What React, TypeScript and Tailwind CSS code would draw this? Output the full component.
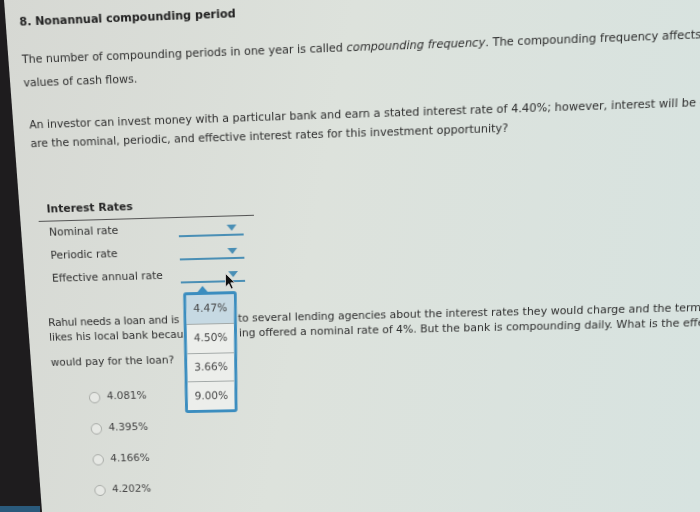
const rates = ['Nominal rate', 'Periodic rate', 'Effective annual rate'];
const choices = ['4.47%', '4.50%', '3.66%', '9.00%'];
const answers = ['4.081%', '4.395%', '4.166%', '4.202%'];

type Pt = [number, number];

// the screenshot is a photo of a monitor: the flat page is mapped onto it with a homography
function solveH(src: Pt[], dst: Pt[]): number[] {
  const A: number[][] = [];
  src.forEach(([x, y], i) => {
    const [u, v] = dst[i];
    A.push([x, y, 1, 0, 0, 0, -u * x, -u * y, u]);
    A.push([0, 0, 0, x, y, 1, -v * x, -v * y, v]);
  });
  for (let c = 0; c < 8; c++) {
    let p = c;
    for (let r = c + 1; r < 8; r++) if (Math.abs(A[r][c]) > Math.abs(A[p][c])) p = r;
    [A[c], A[p]] = [A[p], A[c]];
    for (let r = 0; r < 8; r++) {
      if (r === c) continue;
      const f = A[r][c] / A[c][c];
      for (let k = c; k < 9; k++) A[r][k] -= f * A[c][k];
    }
  }
  return A.map((row, i) => row[8] / row[i]);
}

// screen point -> flat page point
function toFlat(h: number[], u: number, v: number): Pt {
  const a = h[0] - u * h[6];
  const b = h[1] - u * h[7];
  const c = h[3] - v * h[6];
  const d = h[4] - v * h[7];
  const e = u - h[2];
  const f = v - h[5];
  const det = a * d - b * c;
  return [(e * d - b * f) / det, (a * f - e * c) / det];
}

// flat layout anchors (see the class names below)
const TERM = 467.2; // flat width of "to several … and the term"
const RAHUL_Y = 318; // centre of the first line of the loan question
const LAST_RADIO_Y = 494.5;

let s1 = 215;
let H: number[] = [];
for (let i = 0; i < 30; i++) {
  H = solveH(
    [
      [17, 60],
      [678.4, 60],
      [s1 + TERM, RAHUL_Y],
      [70, LAST_RADIO_Y],
    ],
    [
      [22, 60],
      [702, 35],
      [702, 308],
      [100, 490],
    ]
  );
  s1 = toFlat(H, 238, 316)[0];
}
const s2 = toFlat(H, 239, 334)[0];
const pageTransform = `matrix3d(${H[0]},${H[3]},0,${H[6]},${H[1]},${H[4]},0,${H[7]},0,0,1,0,${H[2]},${H[5]},0,1)`;

const TABLE_LEFT = 23;
const dropL = (toFlat(H, 178, 235)[0] + toFlat(H, 181, 281)[0]) / 2;
const dropR = (toFlat(H, 243, 235)[0] + toFlat(H, 245, 281)[0]) / 2;
const labelW = dropL - TABLE_LEFT;
const dropW = dropR - dropL;

const EFF_ROW_TOP = 262;
const popTL = toFlat(H, 183, 292);
const popTR = toFlat(H, 237, 292);
const popBL = toFlat(H, 185, 413);
const popH = popBL[1] - popTL[1];
const popStyle = {
  left: popTL[0] - dropL,
  top: popTL[1] - EFF_ROW_TOP,
  width: popTR[0] - popTL[0],
  transform: `skewX(${(Math.atan((popBL[0] - popTL[0]) / popH) * 180) / Math.PI}deg)`,
};
const itemH = (popH - 9) / 4;

function Dropdown({ open }: { open?: boolean }) {
  return (
    <div className="relative flex h-full flex-col justify-end pb-[4px]" style={{ width: dropW }}>
      <div className="mb-[3px] flex justify-end pr-[7px]">
        <svg width="10" height="6" viewBox="0 0 10 6">
          <path d="M0 0 L10 0 L5 6 Z" fill="#4a8fb5" />
        </svg>
      </div>
      <div className="h-[2px] bg-[#4a8fb5]" />

      {open && (
        <div className="absolute z-10 origin-top-left" style={popStyle}>
          <svg className="absolute -top-[6px] left-[14px]" width="12" height="7" viewBox="0 0 12 7">
            <path d="M0 7 L6 0 L12 7 Z" fill="#3b8dbf" />
          </svg>
          <div className="overflow-hidden rounded-[3px] border-[3px] border-[#3b8dbf] bg-[#eceeeb] text-center text-[#444]">
            {choices.map((c, i) => (
              <div
                key={c}
                className={`flex items-center justify-center ${i > 0 ? 'border-t border-[#a3a9a8]' : ''} ${
                  i === 0 ? 'bg-[#c6d9e3]' : ''
                }`}
                style={{ height: itemH + (i > 0 ? 1 : 0) }}
              >
                {c}
              </div>
            ))}
          </div>
        </div>
      )}
    </div>
  );
}

export default function App() {
  return (
    <div className="relative h-[512px] w-[700px] overflow-hidden bg-[linear-gradient(100deg,#d6d8d3_0%,#dde2dc_45%,#d7e3e0_100%)] font-['DejaVu_Sans',Verdana,sans-serif] text-[11px] text-[#2e2e2e]">
      <div className="w-[900px] origin-top-left whitespace-nowrap pt-[17px]" style={{ transform: pageTransform }}>
        <h1 className="pl-[17px] text-[11px] font-bold leading-[16px] text-[#222]">
          8. Nonannual compounding period
        </h1>

        <div className="mt-[17px] pl-[17px] leading-[20px]">
          <p>
            The number of compounding periods in one year is called <em>compounding frequency</em>. The
            compounding frequency affects the present and future
          </p>
          <p className="mt-[2px]">values of cash flows.</p>
        </div>

        <div className="mt-[20px] pl-[20px] leading-[20px]">
          <p>
            An investor can invest money with a particular bank and earn a stated interest rate of 4.40%;
            however, interest will be compounded quarterly. What
          </p>
          <p className="-mt-[2px]">are the nominal, periodic, and effective interest rates for this investment opportunity?</p>
        </div>

        {/* rates table */}
        <div className="ml-[23px] mt-[44px] w-[220px]">
          <div className="h-[22px] border-b border-[#555] pl-[9px] font-bold leading-[20px] text-[#262626]">
            Interest Rates
          </div>
          {rates.map((r, i) => (
            <div key={r} className="flex h-[23px] items-center">
              <div className="shrink-0 pl-[10px]" style={{ width: labelW }}>
                {r}
              </div>
              <Dropdown open={i === 2} />
            </div>
          ))}
        </div>

        <div className="mt-[24px] pl-[26px] leading-[18px]">
          <p className="flex">
            <span className="shrink-0 tracking-[-0.2px]" style={{ width: s1 - 26 }}>
              Rahul needs a loan and is
            </span>
            <span>to several lending agencies about the interest rates they would charge and the terms</span>
          </p>
          <p className="-mt-[3px] flex">
            <span className="shrink-0" style={{ width: s2 - 26 }}>
              likes his local bank becaus
            </span>
            <span>ing offered a nominal rate of 4%. But the bank is compounding daily. What is the effective</span>
          </p>
          <p className="mt-[8px]">would pay for the loan?</p>
        </div>

        <div className="mt-[11px] pl-[64px] text-[#444]">
          {answers.map((a) => (
            <label key={a} className="flex h-[33px] items-center gap-[7px]">
              <span className="h-[12px] w-[12px] rounded-full border border-[#a5a8a4] bg-[#e6e8e4]" />
              {a}
            </label>
          ))}
        </div>
      </div>

      {/* mouse pointer */}
      <svg className="absolute left-[225px] top-[273px]" width="11" height="17" viewBox="0 0 11 17">
        <path
          d="M0.5 0.5 L0.5 14 L3.8 10.8 L6.2 16 L8.2 15 L5.8 9.8 L10 9.8 Z"
          fill="#111"
          stroke="#ddd"
          strokeWidth="0.8"
        />
      </svg>

      {/* monitor bezel */}
      <div className="absolute inset-0 bg-[#1e1c1e] [clip-path:polygon(0_0,4px_0,42px_512px,0_512px)]" />
      <div className="absolute bottom-0 left-0 h-[6px] w-[40px] bg-[#2a5a7c]" />
    </div>
  );
}
